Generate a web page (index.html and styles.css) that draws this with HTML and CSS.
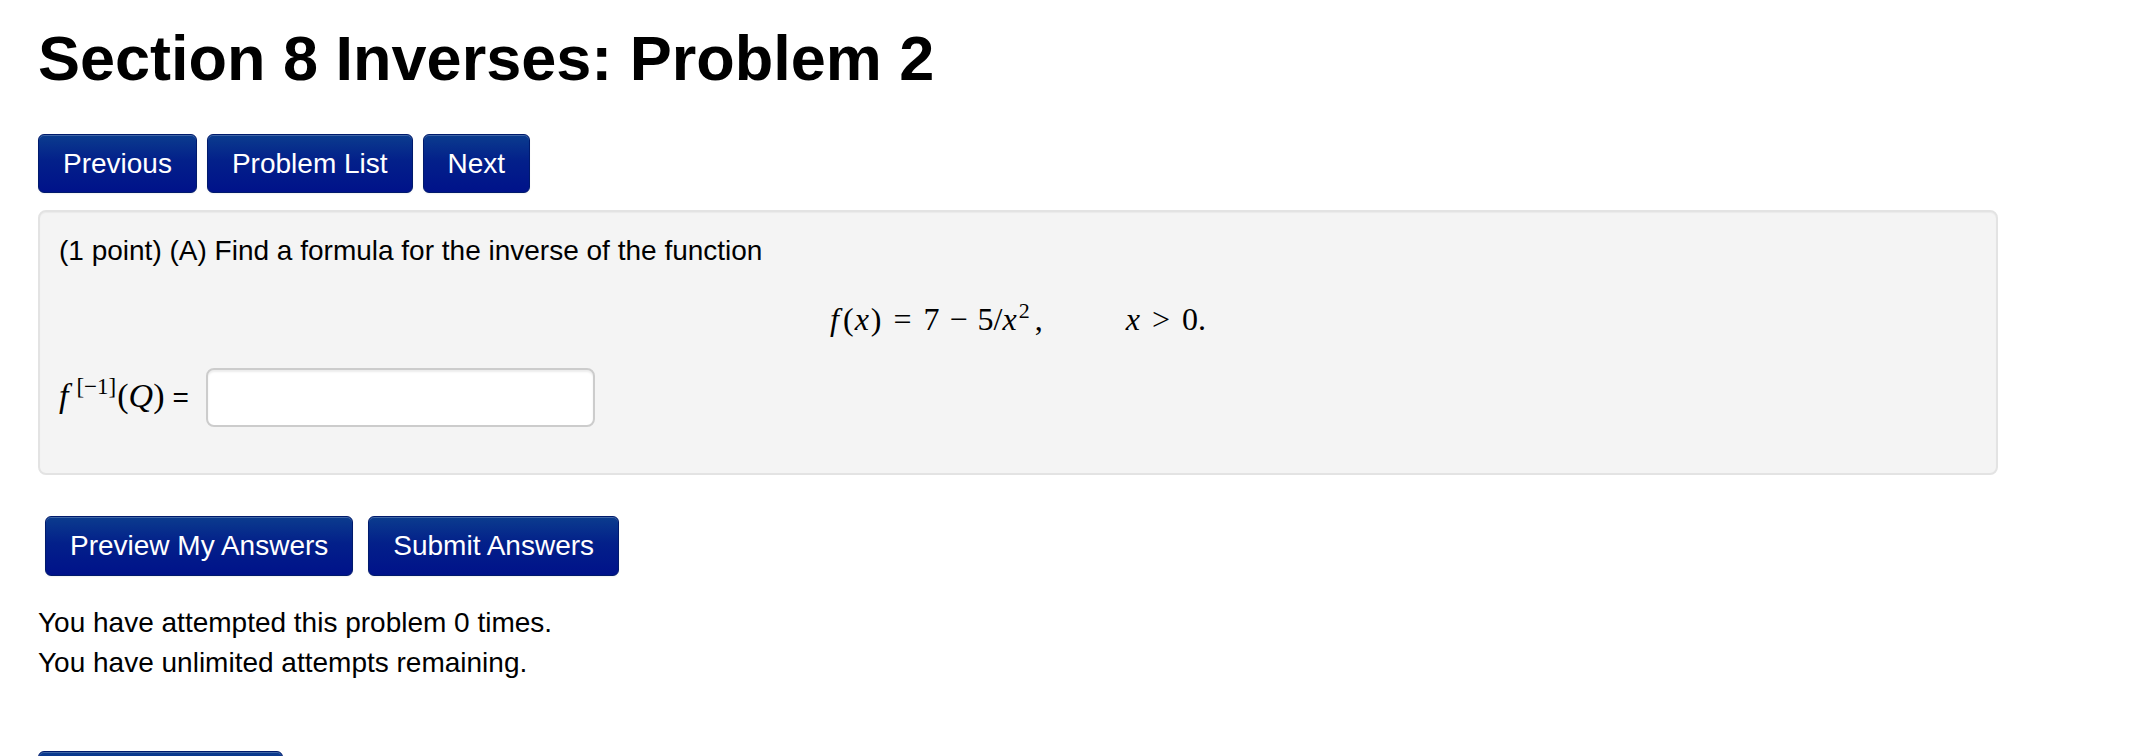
FILE: index.html
```html
<!DOCTYPE html>
<html lang="en">
<head>
<meta charset="utf-8">
<title>Section 8 Inverses: Problem 2</title>
<link rel="stylesheet" href="styles.css">
</head>
<body>
<div class="page">
  <h1 class="title">Section 8 Inverses: Problem 2</h1>

  <nav class="nav-buttons">
    <a class="btn" href="#">Previous</a>
    <a class="btn" href="#">Problem List</a>
    <a class="btn" href="#">Next</a>
  </nav>

  <div class="problem">
    <p class="intro">(1 point) (A) Find a formula for the inverse of the function</p>
    <div class="display-math">
      <span class="m mi f-x">f</span><span class="m mo">(</span><span class="m mi x-in">x</span><span class="m mo">)</span><span class="m rel">=</span><span class="m mn">7</span><span class="m bin">−</span><span class="m mn">5</span><span class="m mo">/</span><span class="m mi">x</span><span class="m msup">2</span><span class="m punct">,</span><span class="m mi x-cond">x</span><span class="m rel gt">&gt;</span><span class="m mn">0</span><span class="m mo">.</span>
    </div>
    <div class="answer-row">
      <label class="ans-label" for="ans"><span class="m lm mi f-lab">f</span><span class="m lab-sup">[−1]</span><span class="m lm mo">(</span><span class="m lm mi">Q</span><span class="m lm mo">)</span><span class="eq">=</span></label>
      <input class="answer" id="ans" type="text">
    </div>
  </div>

  <div class="submit-row">
    <button class="btn btn-tall" type="button">Preview My Answers</button>
    <button class="btn btn-tall" type="button">Submit Answers</button>
  </div>

  <p class="attempts">You have attempted this problem 0 times.<br>You have unlimited attempts remaining.</p>

  <div class="footer-buttons">
    <button class="btn" type="button">Email Instructor</button>
  </div>
</div>
</body>
</html>
```

FILE: styles.css
```css
html, body {
  margin: 0;
  padding: 0;
  background: #ffffff;
}

body {
  font-family: "Liberation Sans", Arial, Helvetica, sans-serif;
  font-size: 28px;
  line-height: 40px;
  color: #000000;
}

.page {
  width: 1960px;
  margin-left: 38px;
}

.title {
  margin: 18px 0 0 0;
  font-size: 63px;
  line-height: 80px;
  font-weight: bold;
  color: #000000;
}

.nav-buttons {
  display: flex;
  gap: 10px;
  margin-top: 36px;
}

.btn {
  display: inline-block;
  box-sizing: border-box;
  font-family: "Liberation Sans", Arial, Helvetica, sans-serif;
  font-size: 28px;
  line-height: 40px;
  color: #ffffff;
  text-decoration: none;
  padding: 9px 24px 8px;
  background: linear-gradient(to bottom, #0b3c8e 0%, #03208a 45%, #00128a 100%);
  border: 1px solid #001a6c;
  border-radius: 6px;
  box-shadow: inset 0 1px 0 rgba(255, 255, 255, 0.22), 0 1px 2px rgba(0, 0, 0, 0.06);
  cursor: pointer;
  white-space: nowrap;
}

.btn-tall {
  padding: 9px 24px 9px;
}

.problem {
  margin-top: 17px;
  background: #f4f4f4;
  border: 2px solid #e3e3e3;
  border-radius: 8px;
  padding: 19px;
  box-shadow: inset 0 1px 1px rgba(0, 0, 0, 0.04);
}

.intro {
  margin: 0;
}

.display-math {
  margin-top: 30px;
  height: 39px;
  text-align: center;
  white-space: nowrap;
}

.m {
  font-family: "Liberation Serif", "Times New Roman", serif;
  font-size: 32px;
  line-height: 1;
}

.mi {
  font-style: italic;
}

.f-x {
  margin-right: 4px;
}

.x-in {
  margin-left: 1px;
  margin-right: 2px;
}

.rel {
  margin: 0 12px;
}

.bin {
  margin: 0 10px;
}

.msup {
  font-size: 22px;
  line-height: 0;
  vertical-align: 12px;
  margin-left: 2px;
}

.punct {
  margin-left: 5px;
}

.x-cond {
  margin-left: 83px;
}

.gt {
  margin: 0 12px;
}

.answer-row {
  display: flex;
  align-items: center;
  gap: 17px;
  margin-top: 28px;
  margin-bottom: 27px;
}

.ans-label {
  line-height: 40px;
  white-space: nowrap;
}

.lm {
  font-size: 34px;
}

.f-lab {
  margin-right: 8px;
}

.lab-sup {
  font-size: 23px;
  line-height: 0;
  vertical-align: 13px;
  margin-right: 1px;
}

.eq {
  margin-left: 8px;
}

.answer {
  box-sizing: border-box;
  width: 389px;
  height: 59px;
  margin: 0;
  padding: 8px 12px;
  font-family: "Liberation Sans", Arial, sans-serif;
  font-size: 28px;
  background: #ffffff;
  border: 2px solid #cccccc;
  border-radius: 8px;
  box-shadow: inset 0 2px 2px rgba(0, 0, 0, 0.075);
  outline: none;
}

.submit-row {
  display: flex;
  gap: 15px;
  margin-top: 41px;
  margin-left: 7px;
}

.attempts {
  margin: 27px 0 0 0;
}

.footer-buttons {
  margin-top: 68px;
}
```
